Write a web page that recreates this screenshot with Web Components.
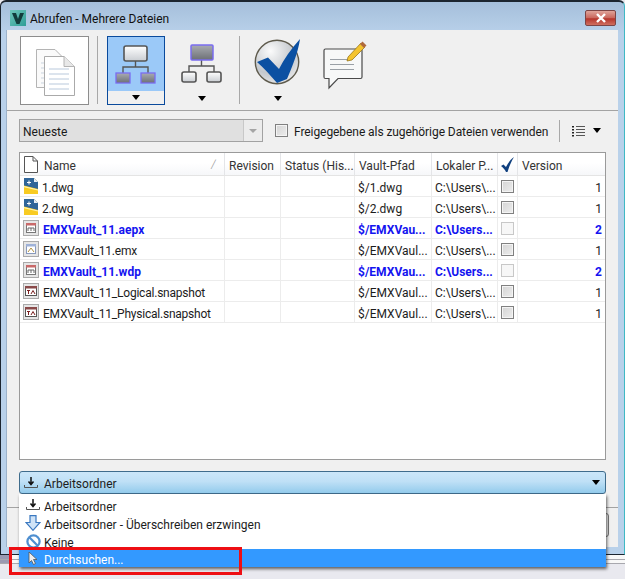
<!DOCTYPE html>
<html lang="de"><head><meta charset="utf-8"><title>Abrufen</title>
<style>
html,body{margin:0;padding:0;width:625px;height:579px;overflow:hidden;background:#e9e9ef;font:12px Roboto,"Noto Sans",sans-serif;color:#1a1a1a}
</style></head><body>
<x-window></x-window>
<x-strip></x-strip>
<script>
const ICONS={
doc:`<svg width="40" height="48" viewBox="0 0 40 48"><g stroke="#b4b4b4" fill="#fafafa"><path d="M.5.5H19L28.5 10V38.5H.5Z"/><path d="M8.5 7.5H28L38.5 17.5V46.5H8.5Z" fill="#fff" stroke="#aaa"/><path d="M28 7.5V17.5H38.5" fill="#e8e8e8"/></g><path d="M5 14H8M5 19H8M5 24H8M5 29H8M5 34H8" stroke="#c9d3de"/><path d="M13 20H33M13 25H33M13 30H33M13 35H33M13 40H33" stroke="#b9c9dc"/></svg>`,
netA:`<svg width="42" height="40" viewBox="0 0 42 40"><defs><linearGradient id="w" x1="0" y1="0" x2="0" y2="1"><stop offset="0" stop-color="#fff"/><stop offset="1" stop-color="#c9cdd2"/></linearGradient><linearGradient id="g" x1="0" y1="0" x2="0" y2="1"><stop offset="0" stop-color="#a9acb2"/><stop offset="1" stop-color="#6d7075"/></linearGradient></defs><path d="M20.5 15V22M8 28V22H33V28" fill="none" stroke="#555" stroke-width="1.4"/><rect x="9" y="1" width="23" height="15" rx="2" fill="url(#w)" stroke="#555" stroke-width="1.6"/><rect x="1" y="28" width="14" height="10" fill="url(#g)" stroke="#7a6cf0" stroke-width="1.3"/><rect x="26" y="28" width="14" height="10" fill="url(#g)" stroke="#7a6cf0" stroke-width="1.3"/></svg>`,
netB:`<svg width="42" height="40" viewBox="0 0 42 40"><defs><linearGradient id="w2" x1="0" y1="0" x2="0" y2="1"><stop offset="0" stop-color="#fff"/><stop offset="1" stop-color="#c9cdd2"/></linearGradient><linearGradient id="g2" x1="0" y1="0" x2="0" y2="1"><stop offset="0" stop-color="#a9acb2"/><stop offset="1" stop-color="#6d7075"/></linearGradient></defs><path d="M20.5 15V22M8 28V22H33V28" fill="none" stroke="#555" stroke-width="1.4"/><rect x="10" y="1" width="22" height="15" rx="1" fill="url(#g2)" stroke="#7a6cf0" stroke-width="1.5"/><rect x="1" y="28" width="14" height="10" rx="2" fill="url(#w2)" stroke="#555" stroke-width="1.6"/><rect x="26" y="28" width="14" height="10" rx="2" fill="url(#w2)" stroke="#555" stroke-width="1.6"/></svg>`,
check:`<svg width="48" height="46" viewBox="0 0 48 46"><defs><radialGradient id="c" cx=".35" cy=".25" r=".85"><stop offset="0" stop-color="#fbfbfb"/><stop offset=".6" stop-color="#c4c8cd"/><stop offset="1" stop-color="#eee"/></radialGradient></defs><circle cx="23" cy="23" r="21.7" fill="url(#c)" stroke="#5e5a4c" stroke-width="1.4"/><path d="M3 23L14 18.500L25 30C30 20 37 10 46 0C44 14 38 28 33 40L23 44C16 36 10 29 3 23Z" fill="#0b50a2"/></svg>`,
note:`<svg width="44" height="50" viewBox="0 0 44 50"><path d="M2.500 9H37.500Q39 9 39 10.500V37Q39 38.500 37.500 38.500H15L6 48V38.500H2.500Q1 38.500 1 37V10.500Q1 9 2.500 9Z" fill="#f7f8f8" stroke="#4a4a4a" stroke-width="1.200"/><path d="M7 19.500H28M7 24.500H31M7 29.500H31" stroke="#9aa0a6"/><path d="M25 17L38 3L42 7L29 20L24 21Z" fill="#f4c430" stroke="#8b6a10" stroke-width=".7"/><path d="M37 4L39.500 1.500L43.500 5.500L41 8Z" fill="#b06a3c"/></svg>`,
list:`<svg width="13" height="12" viewBox="0 0 13 12"><path d="M4 1.500H13M4 4.500H13M4 7.500H13M4 10.500H13" stroke="#555"/><path d="M0 1H2V2.500H0ZM0 4H2V5.500H0ZM0 7H2V8.500H0ZM0 10H2V11.500H0Z" fill="#222"/></svg>`,
page:`<svg width="14" height="17" viewBox="0 0 14 17"><path d="M.5.5H9L13.500 5V16.500H.5Z" fill="#fff" stroke="#555"/><path d="M9 .5V5H13.500" fill="none" stroke="#555"/></svg>`,
dwg:`<svg width="14" height="16" viewBox="0 0 14 16"><path d="M0 0H10L14 4V16H0Z" fill="#f8cb22"/><path d="M0 0H10L14 4V11L0 7.500Z" fill="#2f6599"/><path d="M10 0V4H14Z" fill="#e6eef7"/><path d="M3 4.500H7M5 2.500V6.500" stroke="#fff"/><path d="M0 8L14 11.500V12.500L0 9.200Z" fill="#fff3b0"/></svg>`,
box:`<svg width="16" height="16" viewBox="0 0 16 16"><rect x=".5" y=".5" width="15" height="15" fill="#e6e6e6" stroke="#aaa"/><rect x="3.500" y="3.500" width="9" height="9" fill="#fff" stroke="#777"/><rect x="3" y="3" width="10" height="2.500" fill="#c96a6a"/><path d="M5 11V8H8V11M8 8H11V11" fill="none" stroke="#666"/></svg>`,
emx:`<svg width="16" height="16" viewBox="0 0 16 16"><rect x=".5" y=".5" width="15" height="15" fill="#e6e6e6" stroke="#aaa"/><rect x="3.500" y="3.500" width="9" height="9" fill="#fff" stroke="#8899bb"/><rect x="3" y="3" width="10" height="2.500" fill="#9fb2d8"/><path d="M5 11L8 7L11 11" fill="none" stroke="#b09040"/></svg>`,
snap:`<svg width="16" height="16" viewBox="0 0 16 16"><rect x=".5" y=".5" width="15" height="15" fill="#e6e6e6" stroke="#aaa"/><rect x="2.500" y="3.500" width="11" height="9" fill="#fff" stroke="#555"/><rect x="2" y="3" width="12" height="2.500" fill="#8a4a4a"/><path d="M4 7.500H7M5.500 7.500V11M8 11L10 7.500L12 11" fill="none" stroke="#7a2020"/></svg>`,
down:`<svg width="14" height="12" viewBox="0 0 14 12"><path d="M7 0V7M4.500 4.500L7 7.500L9.500 4.500" fill="none" stroke="#111" stroke-width="1.500"/><path d="M.5 8V10.500H13.500V8" fill="none" stroke="#555"/></svg>`,
force:`<svg width="16" height="16" viewBox="0 0 16 16"><path d="M5 .7H11V7.500H15L8 15.300L1 7.500H5Z" fill="#cfe3f7" stroke="#3a78c0" stroke-width="1.200"/></svg>`,
none:`<svg width="15" height="15" viewBox="0 0 16 16"><circle cx="8" cy="8" r="6.500" fill="#fff" stroke="#4f8fd0" stroke-width="2.400"/><path d="M3.500 3.500L12.500 12.500" stroke="#4f8fd0" stroke-width="2.400"/></svg>`,
cursor:`<svg width="10" height="14" viewBox="0 0 10 14"><path d="M1 1V12L3.500 9.500L5.500 13.500L7.500 12.500L5.500 8.500H9Z" fill="#eee" stroke="#555" stroke-width=".8"/></svg>`,
tick:`<svg width="13" height="15" viewBox="0 0 13 15"><path d="M0 9L2.500 7.500L5 10C7 6 9 3 13 0C10 5 8 10 6.500 15H5C4 12.500 2 10.500 0 9Z" fill="#10407f"/></svg>`
};
function def(name,css,html,init){customElements.define(name,class extends HTMLElement{
 connectedCallback(){if(this.shadowRoot)return;const r=this.attachShadow({mode:"open"});
 r.innerHTML=`<style>${css}</style>`+(typeof html==="function"?html(this):html);if(init)init(this,r);}});}

def("x-icon",":host{display:inline-flex;flex:none;line-height:0}",h=>ICONS[h.getAttribute("name")]);
def("x-arrow",":host{display:block;flex:none;width:0;height:0;border:4.5px solid transparent;border-top:5px solid #000;border-bottom:0}","");

def("x-titlebar",`:host{display:flex;align-items:center;height:28px;padding:4px 8px 0 9px;box-sizing:border-box;flex:none}
.logo{width:16px;height:16px;background:linear-gradient(135deg,#6fc7bb,#2f9d96);display:flex;align-items:center;justify-content:center;margin-right:4px}
.t{font-size:12px;color:#111;white-space:nowrap;padding-top:2px}
.x{margin-left:auto;width:31px;height:16px;box-sizing:border-box;border:1px solid #7c4545;border-radius:2px;background:linear-gradient(#dfa49a,#c9665c 50%,#b5352b 55%,#cf6f60);display:flex;align-items:center;justify-content:center}`,
`<div class="logo"><svg width="12" height="11" viewBox="0 0 12 11"><path d="M0 0H4L6 6L8 0H12L7.500 11H4.500Z" fill="#123c3c"/></svg></div><span class="t">Abrufen - Mehrere Dateien</span>
<div class="x"><svg width="12" height="10" viewBox="0 0 12 10"><path d="M2 1L10 9M10 1L2 9" stroke="#fff" stroke-width="2.400"/></svg></div>`);

def("x-tool",`:host{display:flex;flex-direction:column;align-items:center;box-sizing:border-box;height:69px;width:var(--w,58px);flex:none}
.top{height:55px;width:100%;display:flex;align-items:flex-start;justify-content:center;padding-top:var(--pt,8px);box-sizing:border-box}
.bot{height:14px;width:100%;display:flex;align-items:center;justify-content:center}
:host([active]){border:1px solid #0a4a9c}
:host([active]) .top{background:#9bc9f8;height:54px;padding-top:8px}
:host([active]) .bot{height:13px}`,
h=>`<div class="top"><x-icon name="${h.getAttribute("icon")}"></x-icon></div><div class="bot">${h.hasAttribute("menu")?"<x-arrow></x-arrow>":""}</div>`);
def("x-sep",":host{display:block;flex:none;width:1px;background:#a8a8a8}","");

def("x-toolbar",`:host{display:flex;height:81px;box-sizing:border-box;border-bottom:1px solid #a3a3a3;padding:6px 0 5px 13px;flex:none}
.first{width:69px;height:69px;box-sizing:border-box;border:1px solid #8d8d8d;background:#fff;display:flex;justify-content:center;align-items:center;padding:5px 0 0 3px;flex:none}
x-sep{margin-top:0;height:68px}`,
`<div class="first"><x-icon name="doc"></x-icon></div>
<x-sep style="margin-left:8px"></x-sep>
<x-tool style="margin-left:9px" icon="netA" active menu></x-tool>
<x-tool style="margin-left:8px" icon="netB" menu></x-tool>
<x-sep style="margin-left:8px"></x-sep>
<x-tool style="margin-left:14px;--w:48px;--pt:3px" icon="check" menu></x-tool>
<x-tool style="margin-left:21px;--w:44px;--pt:4px" icon="note"></x-tool>`);

def("x-checkbox",`:host{display:block;flex:none;width:13px;height:13px;box-sizing:border-box;border:1px solid #808080;background:linear-gradient(135deg,#d4d4d4,#ededed);box-shadow:inset 0 0 0 1px #f4f4f4}
:host([disabled]){border-color:#c8c8c8;background:#f7f7f7;box-shadow:none}`,"");

def("x-filter",`:host{display:flex;align-items:center;height:41px;padding:8px 0 10px 12px;box-sizing:border-box;flex:none}
.combo{width:244px;height:23px;flex:none;box-sizing:border-box;border:1px solid #a2a2a2;background:#e0e0e0;display:flex;align-items:center;padding-left:3px;font-size:12px}
.combo span{flex:1;padding-top:2px}
.a{width:18px;height:21px;background:#ececec;border-left:1px solid #c8c8c8;display:flex;align-items:center;justify-content:center}
.a i{display:block;width:0;height:0;border:4px solid transparent;border-top:4px solid #a5a5a5;border-bottom:0}
.l{margin-left:6px;white-space:nowrap;font-size:12px;width:254px;flex:none;letter-spacing:-.07px;padding-top:3px}
x-sep{height:22px;margin-left:11px}`,
`<div class="combo"><span>Neueste</span><div class="a"><i></i></div></div>
<x-checkbox style="margin-left:12px"></x-checkbox><span class="l">Freigegebene als zugehörige Dateien verwenden</span>
<x-sep></x-sep><x-icon name="list" style="margin-left:12px"></x-icon><x-arrow style="margin-left:8px"></x-arrow>`);

const COLS="205px 56px 74px 77px 66px 20px 1fr";
def("x-row",`:host{display:grid;grid-template-columns:${COLS};height:21px;box-sizing:border-box;border-bottom:1px solid #ececec;align-items:center;white-space:nowrap;font-size:12px;color:#1c1c1c;--ls:-.22px}
:host([changed]){color:#1414f0;font-weight:700;--ls:0}
div{height:20px;box-sizing:border-box;border-right:1px solid #ececec;padding-left:3px;overflow:hidden;display:flex;align-items:center}
div:last-child{border:0;justify-content:flex-end;padding-right:3px}
.n{padding-left:3px;gap:3px}
.c{padding:0;justify-content:center}
span{padding-top:3px}
.f{letter-spacing:var(--ls)}`,
h=>{const a=k=>h.getAttribute(k);return `<div class="n"><x-icon name="${a("icon")}" style="margin-left:${a("icon")==="dwg"?1:0}px;margin-right:${a("icon")==="dwg"?1:1}px"></x-icon><span class="f">${a("file")}</span></div><div></div><div></div><div><span>${a("vault")}</span></div><div><span>${a("local")}</span></div><div class="c"><x-checkbox ${h.hasAttribute("changed")?"disabled":""}></x-checkbox></div><div><span>${a("ver")}</span></div>`});

def("x-table",`:host{display:block;margin-left:12px;width:587px;height:308px;box-sizing:border-box;border:1px solid #9a9a9a;background:#fff;flex:none}
.h{display:grid;grid-template-columns:${COLS};height:23px;background:linear-gradient(#fff 45%,#f6f7f9);white-space:nowrap;font-size:12px;color:#333;box-sizing:border-box;border-bottom:1px solid #e4e4e4}
.h>div{display:flex;align-items:center;padding-left:4px;box-sizing:border-box;border-right:1px solid #e4e5e8;overflow:hidden}
.h>div:last-child{border:0}
.h span{padding-top:3px}
.h .s{margin-left:auto;margin-right:8px;color:#999;font-size:8px;padding:0}`,
`<div class="h"><div><x-icon name="page" style="margin:0 6px 0 0"></x-icon><span>Name</span><span class="s">&#9585;</span></div><div><span>Revision</span></div><div><span>Status (His...</span></div><div><span>Vault-Pfad</span></div><div><span>Lokaler P...</span></div><div style="padding-left:3px"><x-icon name="tick"></x-icon></div><div><span>Version</span></div></div>
<x-row icon="dwg" file="1.dwg" vault="$/1.dwg" local="C:\\Users\\..." ver="1"></x-row>
<x-row icon="dwg" file="2.dwg" vault="$/2.dwg" local="C:\\Users\\..." ver="1"></x-row>
<x-row changed icon="box" file="EMXVault_11.aepx" vault="$/EMXVau..." local="C:\\Users..." ver="2"></x-row>
<x-row icon="emx" file="EMXVault_11.emx" vault="$/EMXVaul..." local="C:\\Users\\..." ver="1"></x-row>
<x-row changed icon="box" file="EMXVault_11.wdp" vault="$/EMXVau..." local="C:\\Users..." ver="2"></x-row>
<x-row icon="snap" file="EMXVault_11_Logical.snapshot" vault="$/EMXVaul..." local="C:\\Users\\..." ver="1"></x-row>
<x-row icon="snap" file="EMXVault_11_Physical.snapshot" vault="$/EMXVaul..." local="C:\\Users\\..." ver="1"></x-row>`);

def("x-option",`:host{display:flex;align-items:center;height:18px;font-size:12px;padding-left:4px;box-sizing:border-box;white-space:nowrap;color:#1c1c1c}
:host([selected]){background:#3399ff;color:#fff}
.i{width:20px;display:flex;justify-content:center;flex:none;margin-right:1px}
.t{padding-top:3px}`,
h=>`<span class="i"><x-icon name="${h.getAttribute("icon")}"></x-icon></span><span class="t"><slot></slot></span>`);

def("x-dropdown",`:host{display:block;position:relative;margin-left:12px;width:587px;height:23px;flex:none}
.b{height:23px;box-sizing:border-box;border:1px solid #3f6c8c;border-radius:3px;background:linear-gradient(#cbe6f9,#bfe0f6 45%,#93cbec);display:flex;align-items:center;padding:0 4px;font-size:12px;color:#1c1c1c}
.b span{margin-left:6px;flex:1;padding-top:3px}
.m{position:absolute;left:0;top:23px;width:587px;background:#fff;box-shadow:1px 2px 3px rgba(0,0,0,.6);z-index:2;padding-top:2px;box-sizing:border-box;height:73px}
.m x-option:last-child{position:absolute;left:0;right:0;bottom:0}`,
`<div class="b"><x-icon name="down"></x-icon><span>Arbeitsordner</span><x-arrow style="margin-right:1px"></x-arrow></div>
<div class="m"><x-option icon="down">Arbeitsordner</x-option><x-option icon="force">Arbeitsordner - Überschreiben erzwingen</x-option><x-option icon="none">Keine</x-option><x-option icon="cursor" selected>Durchsuchen...</x-option></div>`);

def("x-footer",`:host{display:block;flex:1;margin-top:13px;border-top:1px solid #a3a3a3;position:relative}
.btn{position:absolute;right:9px;top:5px;width:60px;height:24px;box-sizing:border-box;border:1px solid #777;border-radius:3px;background:#e8e8e8}`,`<div class="btn"></div>`);

def("x-window",`:host{display:block;position:relative;width:625px;height:555px;box-sizing:border-box;background:linear-gradient(#a5bfdb,#b9d1ea 32px);border:1px solid #1c2530;border-top-width:2px;border-bottom-width:1px;border-right-color:#3fb8c4;border-radius:6px 6px 0 0}
.body{margin:0 6px;height:517px;background:#f0f0f0;display:flex;flex-direction:column;box-shadow:-1px 0 0 #9db3cb}
.red{position:absolute;left:8px;top:545px;width:233px;height:28px;box-sizing:border-box;border:3px solid #ee0f14;z-index:5}`,
`<x-titlebar></x-titlebar><div class="body"><x-toolbar></x-toolbar><x-filter></x-filter><x-table></x-table><div style="height:11px;flex:none"></div><x-dropdown></x-dropdown><x-footer></x-footer></div><div class="red"></div>`);

def("x-strip",`:host{display:block;height:9px;box-sizing:border-box;border-bottom:1px solid #a8a8ae;background:linear-gradient(90deg,#9a9ab2 10px,#f8f8f8 10px)}
div{height:4px;border-bottom:1px solid #a8a8ae}`,`<div></div>`);
</script></body></html>
